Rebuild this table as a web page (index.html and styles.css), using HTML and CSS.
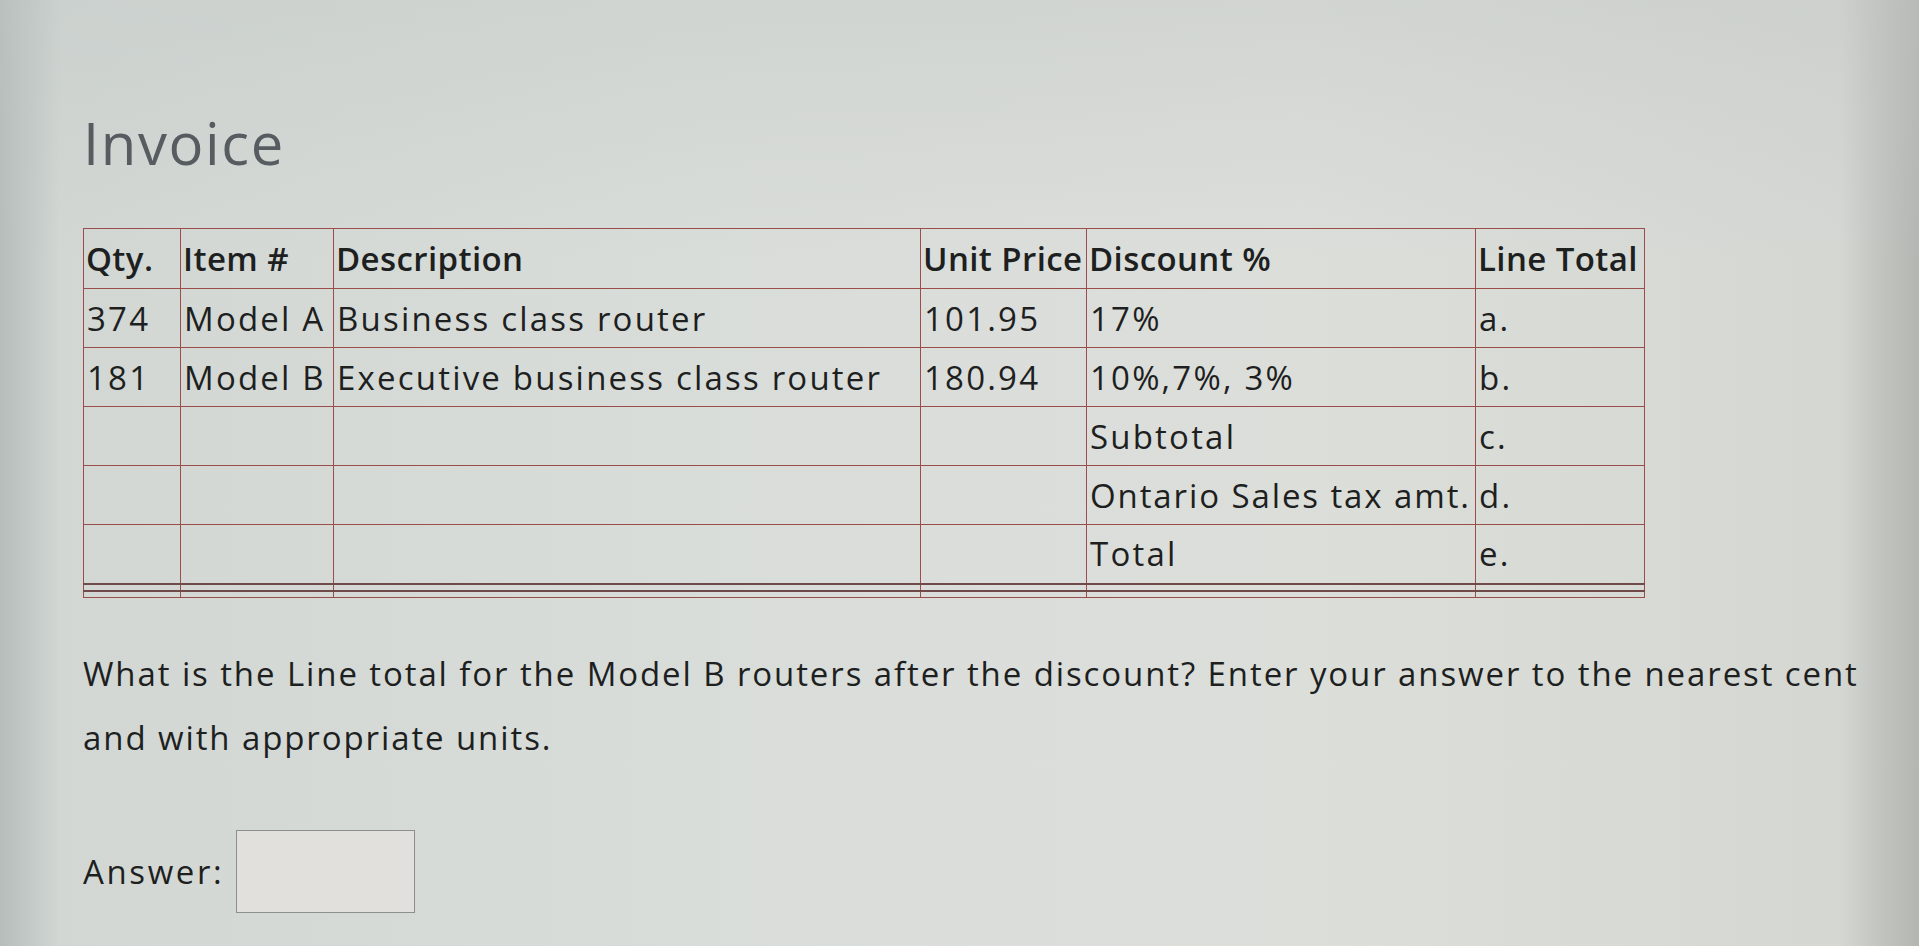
FILE: index.html
```html
<!DOCTYPE html>
<html lang="en">
<head>
<meta charset="utf-8">
<title>Invoice</title>
<link rel="stylesheet" href="styles.css">
</head>
<body>
<div class="screen">
  <div class="page">
    <h1 class="title">Invoice</h1>
    <table class="invoice">
      <colgroup>
        <col class="c-qty"><col class="c-item"><col class="c-desc"><col class="c-price"><col class="c-disc"><col class="c-total">
      </colgroup>
      <thead>
        <tr class="row head">
          <th>Qty.</th><th>Item #</th><th>Description</th><th>Unit Price</th><th>Discount %</th><th>Line Total</th>
        </tr>
      </thead>
      <tbody>
        <tr class="row"><td>374</td><td>Model A</td><td>Business class router</td><td>101.95</td><td>17%</td><td>a.</td></tr>
        <tr class="row"><td>181</td><td>Model B</td><td>Executive business class router</td><td>180.94</td><td>10%,7%, 3%</td><td>b.</td></tr>
        <tr class="row"><td></td><td></td><td></td><td></td><td>Subtotal</td><td>c.</td></tr>
        <tr class="row"><td></td><td></td><td></td><td></td><td class="tight">Ontario Sales tax amt.</td><td>d.</td></tr>
        <tr class="row"><td></td><td></td><td></td><td></td><td>Total</td><td>e.</td></tr>
        <tr class="thin"><td></td><td></td><td></td><td></td><td></td><td></td></tr>
        <tr class="thin"><td></td><td></td><td></td><td></td><td></td><td></td></tr>
      </tbody>
    </table>
    <p class="question">What is the Line total for the Model B routers after the discount? Enter your answer to the nearest cent and with appropriate units.</p>
    <div class="answer">
      <label class="answer-label" for="ans">Answer:</label>
      <input class="answer-box" id="ans" type="text">
    </div>
  </div>
</div>
</body>
</html>
```

FILE: styles.css
```css
html, body {
  margin: 0;
  padding: 0;
}
body {
  width: 1919px;
  height: 946px;
  overflow: hidden;
  font-family: "Open Sans", "Liberation Sans", sans-serif;
  color: #1e1f1f;
}
.screen {
  height: 946px;
  background:
    linear-gradient(180deg, rgba(190, 197, 194, 0.35) 0px, rgba(190, 197, 194, 0) 260px),
    linear-gradient(90deg, #b7bdba 0px, #c5cbc8 34px, #d2d7d4 60px, #d9ddda 700px, #dcdeda 1300px, #d5d7d3 1840px, #c2c4c0 1880px, #b4b6b2 1919px);
}
.page {
  padding: 108px 0 0 83px;
  display: flex;
  flex-direction: column;
  align-items: flex-start;
}
.title {
  margin: 0;
  font-size: 58px;
  font-weight: 500;
  line-height: 70px;
  color: #565c5f;
  letter-spacing: 1.6px;
}
.invoice {
  margin-top: 50px;
  border-collapse: collapse;
  table-layout: fixed;
  width: 1561px;
  font-size: 33px;
}
.c-qty { width: 97px; }
.c-item { width: 153px; }
.c-desc { width: 587px; }
.c-price { width: 166px; }
.c-disc { width: 389px; }
.c-total { width: 169px; }
.invoice th, .invoice td {
  border: 1px solid #9b4d4b;
  padding: 0 0 0 3px;
  text-align: left;
  white-space: nowrap;
  overflow: hidden;
  vertical-align: middle;
}
.invoice th {
  font-weight: 600;
  letter-spacing: 0.4px;
  padding-left: 2px;
}
.invoice td {
  font-weight: 400;
  letter-spacing: 2.2px;
}
.invoice td.tight {
  letter-spacing: 1.9px;
}
.row.head { height: 60px; }
.row { height: 59px; }
.thin { height: 7px; }
.thin td { border-top: 2px solid #6f4a48; }
.question {
  margin: 44px 0 0 0;
  width: 1800px;
  font-size: 33px;
  line-height: 64px;
  letter-spacing: 1.9px;
}
.answer {
  margin-top: 60px;
  display: flex;
  align-items: center;
  gap: 12px;
}
.answer-label {
  font-size: 33px;
  letter-spacing: 2.6px;
}
.answer-box {
  width: 179px;
  height: 83px;
  margin: 0;
  padding: 0;
  border: 1px solid #8c8f8e;
  background: #e1e0dc;
  box-sizing: border-box;
}
```
